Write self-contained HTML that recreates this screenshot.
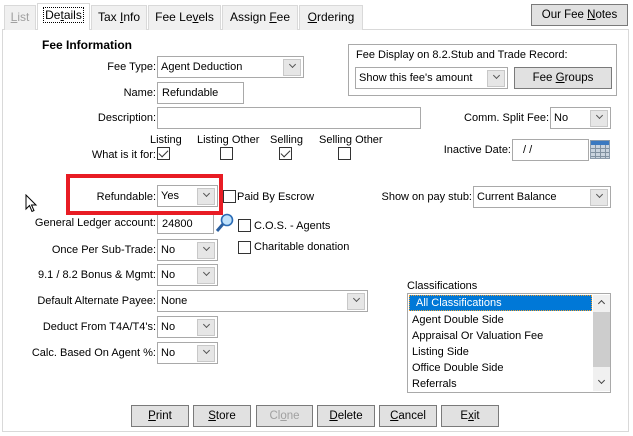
<!DOCTYPE html>
<html><head><style>
*{box-sizing:border-box;margin:0;padding:0}
body{width:633px;height:436px;background:#fff;font-family:"Liberation Sans",Arial,sans-serif;font-size:11px;color:#000;position:relative;overflow:hidden}
.a{position:absolute;white-space:nowrap}
.tab{position:absolute;top:5px;height:25px;background:#f0f0f0;border:1px solid #d9d9d9;border-bottom:none;text-align:center;line-height:23px;font-size:12px}
.panel{position:absolute;left:2px;top:29px;width:627px;height:403px;border:1px solid #d9d9d9;background:#fff}
.lbl{position:absolute;text-align:right;white-space:nowrap}
.inp{position:absolute;border:1px solid #a9a9a9;background:#fff;padding-left:4px;line-height:21px;white-space:nowrap}
.sel{position:absolute;border:1px solid #a9a9a9;background:#fff;padding-left:3px;line-height:21px;white-space:nowrap}
.sel:after{content:"";position:absolute;right:2px;top:2px;width:16px;height:15px;background:#e6e6e6;border:1px solid #c8c8c8}
.sel i{position:absolute;right:8px;top:5px;width:5px;height:5px;border-right:1px solid #555;border-bottom:1px solid #555;transform:rotate(45deg);z-index:2}
.cb{position:absolute;width:13px;height:13px;border:1px solid #333;background:#fff}
.ck:after{content:"";position:absolute;left:3px;top:0px;width:4px;height:8px;border-right:1px solid #333;border-bottom:1px solid #333;transform:rotate(45deg)}
.btn{position:absolute;height:22px;background:#e1e1e1;border:1px solid #7a7a7a;text-align:center;line-height:20px;font-size:11.5px}
u{text-decoration:underline}
</style></head><body>
<div class="panel"></div>
<div class="tab" style="left:4px;width:32px;color:#a0a0a0"><u>L</u>ist</div>
<div class="tab" style="left:37px;top:3px;width:53px;height:27px;background:#fff;z-index:3"><span style="border:1px dotted #000;padding:0 1px">De<u>t</u>ails</span></div>
<div class="tab" style="left:91px;width:56px">Tax <u>I</u>nfo</div>
<div class="tab" style="left:148px;width:73px">Fee Le<u>v</u>els</div>
<div class="tab" style="left:222px;width:76px">Assign <u>F</u>ee</div>
<div class="tab" style="left:299px;width:64px"><u>O</u>rdering</div>
<div class="btn" style="left:531px;top:4px;width:97px">Our Fee <u>N</u>otes</div>

<div class="a" style="left:42px;top:38px;font-weight:bold;font-size:12px">Fee Information</div>
<div class="lbl" style="right:477px;top:61px">Fee Type:</div>
<div class="sel" style="left:157px;top:56px;width:147px;height:22px">Agent Deduction<i></i></div>
<div class="lbl" style="right:477px;top:87px">Name:</div>
<div class="inp" style="left:157px;top:82px;width:87px;height:22px">Refundable</div>
<div class="lbl" style="right:477px;top:112px">Description:</div>
<div class="inp" style="left:157px;top:107px;width:264px;height:22px"></div>
<div class="a" style="left:150px;top:134px">Listing</div>
<div class="a" style="left:197px;top:134px">Listing Other</div>
<div class="a" style="left:270px;top:134px">Selling</div>
<div class="a" style="left:319px;top:134px">Selling Other</div>
<div class="lbl" style="right:477px;top:149px">What is it for:</div>
<div class="cb ck" style="left:157px;top:147px"></div>
<div class="cb" style="left:220px;top:147px"></div>
<div class="cb ck" style="left:279px;top:147px"></div>
<div class="cb" style="left:338px;top:147px"></div>

<div class="a" style="left:348px;top:44px;width:269px;height:52px;border:1px solid #a9a9a9"></div>
<div class="a" style="left:356px;top:49px">Fee Display on 8.2.Stub and Trade Record:</div>
<div class="sel" style="left:355px;top:67px;width:153px;height:22px">Show this fee's amount<i></i></div>
<div class="btn" style="left:514px;top:67px;width:98px">Fee <u>G</u>roups</div>

<div class="lbl" style="right:84px;top:112px">Comm. Split Fee:</div>
<div class="sel" style="left:550px;top:107px;width:61px;height:22px">No<i></i></div>
<div class="lbl" style="right:122px;top:144px">Inactive Date:</div>
<div class="inp" style="left:512px;top:139px;width:77px;height:22px;padding-left:10px">/ /</div>
<svg class="a" style="left:590px;top:140px" width="20" height="19"><rect x="0.5" y="0.5" width="19" height="18" fill="#c9d3de" stroke="#8a9aab"/><rect x="1" y="1" width="18" height="4" fill="#3a78c0"/><g stroke="#8090a0" stroke-width="1"><line x1="1" y1="8.5" x2="19" y2="8.5"/><line x1="1" y1="12.5" x2="19" y2="12.5"/><line x1="1" y1="16.5" x2="19" y2="16.5"/><line x1="5.5" y1="5" x2="5.5" y2="18"/><line x1="10.5" y1="5" x2="10.5" y2="18"/><line x1="15.5" y1="5" x2="15.5" y2="18"/></g></svg>

<div class="a" style="left:66px;top:174px;width:157px;height:41px;border:4px solid #e81c24;z-index:4"></div>
<div class="lbl" style="right:477px;top:191px">Refundable:</div>
<div class="sel" style="left:157px;top:185px;width:61px;height:22px">Yes<i></i></div>
<div class="cb" style="left:223px;top:190px"></div>
<div class="a" style="left:237px;top:191px">Paid By Escrow</div>
<svg class="a" style="left:25px;top:194px" width="14" height="20"><path d="M1 1 L1 15 L4.5 11.5 L7 17.5 L9 16.5 L6.5 11 L11 11 Z" fill="#fff" stroke="#000" stroke-width="1"/></svg>

<div class="lbl" style="right:477px;top:217px">General Ledger account:</div>
<div class="inp" style="left:157px;top:213px;width:57px;height:21px">24800</div>
<svg class="a" style="left:215px;top:213px" width="20" height="20"><circle cx="12" cy="7" r="5.5" fill="#bfe1fb" stroke="#2a6bb5" stroke-width="1.6"/><line x1="8" y1="11" x2="2" y2="18" stroke="#2a5fa0" stroke-width="3"/></svg>
<div class="cb" style="left:238px;top:219px"></div>
<div class="a" style="left:254px;top:220px">C.O.S. - Agents</div>
<div class="cb" style="left:238px;top:241px"></div>
<div class="a" style="left:254px;top:241px">Charitable donation</div>

<div class="lbl" style="right:477px;top:244px">Once Per Sub-Trade:</div>
<div class="sel" style="left:157px;top:239px;width:61px;height:22px">No<i></i></div>
<div class="lbl" style="right:477px;top:269px">9.1 / 8.2 Bonus &amp; Mgmt:</div>
<div class="sel" style="left:157px;top:264px;width:61px;height:22px">No<i></i></div>
<div class="lbl" style="right:477px;top:295px">Default Alternate Payee:</div>
<div class="sel" style="left:157px;top:290px;width:211px;height:22px">None<i></i></div>
<div class="lbl" style="right:477px;top:321px">Deduct From T4A/T4's:</div>
<div class="sel" style="left:157px;top:316px;width:61px;height:22px">No<i></i></div>
<div class="lbl" style="right:477px;top:347px">Calc. Based On Agent %:</div>
<div class="sel" style="left:157px;top:342px;width:61px;height:22px">No<i></i></div>

<div class="lbl" style="right:161px;top:191px">Show on pay stub:</div>
<div class="sel" style="left:473px;top:186px;width:138px;height:22px">Current Balance<i></i></div>

<div class="a" style="left:407px;top:280px">Classifications</div>
<div class="a" style="left:407px;top:293px;width:204px;height:100px;border:1px solid #a9a9a9;background:#fff">
 <div class="a" style="left:1px;top:1px;width:183px;height:16px;background:#0078d7;color:#fff;padding-left:6px;line-height:15px;border:1px dotted #f0a030">All Classifications</div>
 <div class="a" style="left:4px;top:18px;line-height:16px">Agent Double Side<br>Appraisal Or Valuation Fee<br>Listing Side<br>Office Double Side<br>Referrals</div>
 <div class="a" style="left:185px;top:1px;width:17px;height:96px;background:#f0f0f0"><div class="a" style="left:0;top:17px;width:17px;height:55px;background:#cdcdcd"></div><div class="a" style="left:6px;top:6px;width:5px;height:5px;border-left:1px solid #444;border-top:1px solid #444;transform:rotate(45deg)"></div><div class="a" style="left:6px;top:83px;width:5px;height:5px;border-right:1px solid #444;border-bottom:1px solid #444;transform:rotate(45deg)"></div></div>
</div>

<div class="btn" style="left:131px;top:405px;width:58px"><u>P</u>rint</div>
<div class="btn" style="left:193px;top:405px;width:58px"><u>S</u>tore</div>
<div class="btn" style="left:256px;top:405px;width:57px;color:#a0a0a0">Cl<u>o</u>ne</div>
<div class="btn" style="left:317px;top:405px;width:58px"><u>D</u>elete</div>
<div class="btn" style="left:379px;top:405px;width:58px"><u>C</u>ancel</div>
<div class="btn" style="left:441px;top:405px;width:58px">E<u>x</u>it</div>
</body></html>
